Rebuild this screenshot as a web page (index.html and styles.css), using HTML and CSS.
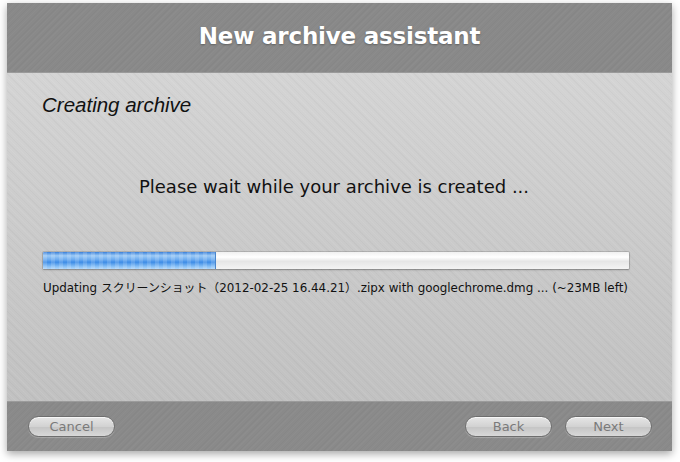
FILE: index.html
```html
<!DOCTYPE html>
<html>
<head>
<meta charset="utf-8">
<link rel="stylesheet" href="styles.css">
</head>
<body>
<div class="window">
  <header class="header">
    <h1 class="title">New archive assistant</h1>
  </header>
  <main class="content">
    <h2 class="step">Creating archive</h2>
    <p class="message">Please wait while your archive is created ...</p>
    <div class="progress">
      <div class="progress-fill" style="width: 29.3%"></div>
    </div>
    <p class="status">Updating スクリーンショット（2012-02-25 16.44.21）.zipx with googlechrome.dmg ... (~23MB left)</p>
  </main>
  <footer class="footer">
    <button class="btn">Cancel</button>
    <div class="nav">
      <button class="btn">Back</button>
      <button class="btn">Next</button>
    </div>
  </footer>
</div>
</body>
</html>
```

FILE: styles.css
```css
html, body {
  margin: 0;
  padding: 0;
  background: #ffffff;
  width: 680px;
  height: 462px;
  overflow: hidden;
}

.window {
  margin: 3px 8px 0 7px;
  width: 665px;
  height: 448px;
  display: flex;
  flex-direction: column;
  box-shadow: 0 3px 8px rgba(0,0,0,0.35);
  font-family: "DejaVu Sans", "Noto Sans CJK JP", sans-serif;
}

.header {
  height: 70px;
  flex: none;
  display: flex;
  align-items: center;
  justify-content: center;
  padding-bottom: 3px;
  box-sizing: border-box;
  background-color: #898989;
  background-image:
    repeating-linear-gradient(135deg, rgba(255,255,255,0.025) 0 1px, rgba(0,0,0,0) 1px 3px, rgba(0,0,0,0.025) 3px 4px, rgba(0,0,0,0) 4px 5px);
  border-bottom: 1px solid #9a9a9a;
}

.title {
  margin: 0;
  color: #ffffff;
  font-family: "DejaVu Sans", sans-serif;
  font-weight: bold;
  font-size: 23px;
  letter-spacing: -0.2px;
  text-shadow: 0 1px 2px rgba(0,0,0,0.3);
}

.content {
  flex: 1;
  display: flex;
  flex-direction: column;
  padding: 0 43px 0 35px;
  background-color: #c9c9c9;
  background-image:
    repeating-linear-gradient(45deg, rgba(255,255,255,0.06) 0 1px, rgba(0,0,0,0) 1px 3px, rgba(0,0,0,0.025) 3px 4px, rgba(0,0,0,0) 4px 6px),
    linear-gradient(#d4d4d4, #c1c1c1);
}

.step {
  margin: 20px 0 0 0;
  font-family: "Liberation Sans", sans-serif;
  font-style: italic;
  font-weight: normal;
  font-size: 20.5px;
  color: #111111;
  line-height: 24px;
}

.message {
  margin: 59px 0 0 0;
  text-align: center;
  font-size: 18px;
  line-height: 22px;
  color: #111111;
  padding-right: 3px;
}

.progress {
  margin: 54px 0 0 1px;
  height: 17px;
  border-radius: 1px;
  background: linear-gradient(#f0f0f0 0%, #ffffff 30%, #e6e6e6 55%, #f4f4f4 100%);
  box-shadow: 0 0 0 1px rgba(0,0,0,0.12), 0 1px 2px rgba(0,0,0,0.25);
  overflow: hidden;
}

.progress-fill {
  height: 100%;
  background-image:
    repeating-linear-gradient(90deg, rgba(255,255,255,0.15) 0 4px, rgba(255,255,255,0) 4px 8px),
    linear-gradient(#3a7fd8 0%, #9ccaf6 22%, #6aaaf0 45%, #3d8ce6 60%, #86bff6 85%, #b0d6fa 100%);
  border-right: 1px solid #4a86cc;
}

.status {
  margin: 12px 0 0 1px;
  font-size: 11.9px;
  line-height: 15px;
  color: #111111;
  white-space: nowrap;
}

.footer {
  height: 49px;
  flex: none;
  display: flex;
  align-items: center;
  justify-content: space-between;
  padding: 0 20px 0 21px;
  background-color: #8a8a8a;
  background-image:
    repeating-linear-gradient(135deg, rgba(255,255,255,0.025) 0 1px, rgba(0,0,0,0) 1px 3px, rgba(0,0,0,0.025) 3px 4px, rgba(0,0,0,0) 4px 5px);
  border-top: 1px solid #9b9b9b;
}

.nav {
  display: flex;
  gap: 13px;
}

.btn {
  width: 87px;
  height: 21px;
  padding: 0;
  border-radius: 11px;
  border: 1px solid #6e6e6e;
  background: linear-gradient(#e6e6e6 0%, #d2d2d2 50%, #c4c4c4 51%, #d8d8d8 100%);
  box-shadow: inset 0 1px 0 rgba(255,255,255,0.7), 0 1px 1px rgba(255,255,255,0.25);
  font-family: "DejaVu Sans", sans-serif;
  font-size: 13px;
  color: #7a7a7a;
  line-height: 19px;
}
```
